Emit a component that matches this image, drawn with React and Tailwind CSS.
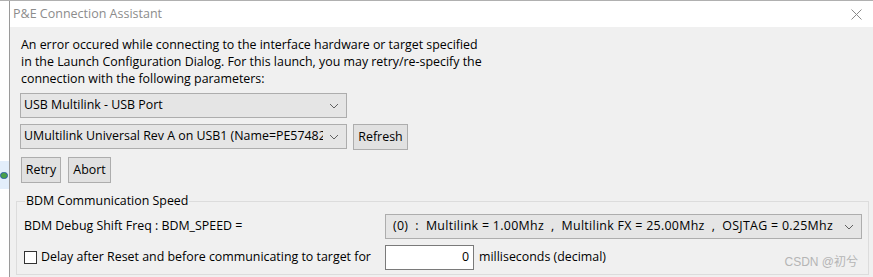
import React from 'react';

const font = { fontFamily: '"Open Sans", "Noto Sans CJK SC", sans-serif' };

function Chevron() {
  return (
    <svg width="10" height="6" viewBox="0 0 10 6" className="shrink-0">
      <polyline points="1,1 5,5 9,1" fill="none" stroke="#606060" strokeWidth="1" />
    </svg>
  );
}

function Combo({ text, className }) {
  return (
    <div className={`h-[25px] flex items-center justify-between bg-[#e5e5e5] border border-[#adadad] pl-[3px] pr-[7px] ${className}`}>
      <span className="whitespace-pre overflow-hidden mr-[6px]">{text}</span>
      <Chevron />
    </div>
  );
}

function Btn({ children, className }) {
  return (
    <div className={`h-[26px] flex items-center justify-center bg-[#e1e1e1] border border-[#adadad] ${className}`}>
      {children}
    </div>
  );
}

export default function App() {
  return (
    <div className="w-[873px] h-[277px] bg-white flex overflow-hidden relative text-[12.4px] text-black border-t border-[#b0b0b0]" style={font}>
      {/* outside strip at left */}
      <div className="w-[9px] shrink-0 flex flex-col">
        <div className="h-[160px]" />
        <div className="h-[28px] bg-[#e3eefa] flex items-center">
          <div className="w-[8px] h-[7px] rounded-sm bg-[#4aa04a] border border-[#2b5fa8]" />
        </div>
      </div>

      {/* dialog */}
      <div className="flex-1 flex flex-col border-l border-[#9a9a9a]">
        {/* title bar */}
        <div className="h-[26px] shrink-0 flex items-center justify-between pl-[3px] pr-[11px] bg-white">
          <span className="text-[#8c8c8c] text-[12.5px]">P&amp;E Connection Assistant</span>
          <svg width="11" height="11" viewBox="0 0 11 11">
            <path d="M0.5 0.5 L10.5 10.5 M10.5 0.5 L0.5 10.5" stroke="#8a8a8a" strokeWidth="1" />
          </svg>
        </div>

        {/* body */}
        <div className="flex-1 bg-[#f0f0f0] pl-[10px] pr-[4px] pt-[9px] flex flex-col">
          <p className="leading-[17px] pl-[1px] whitespace-nowrap">
            An error occured while connecting to the interface hardware or target specified<br />
            in the Launch Configuration Dialog. For this launch, you may retry/re-specify the<br />
            connection with the following parameters:
          </p>

          <Combo text="USB Multilink - USB Port" className="w-[327px] mt-[6px]" />

          <div className="flex gap-[6px] mt-[6px]">
            <Combo text="UMultilink Universal Rev A on USB1 (Name=PE5748207)" className="w-[327px]" />
            <Btn className="w-[55px] h-[25px]">Refresh</Btn>
          </div>

          <div className="flex gap-[7px] mt-[7px] pl-[1px]">
            <Btn className="w-[40px]">Retry</Btn>
            <Btn className="w-[43px]">Abort</Btn>
          </div>

          {/* group box */}
          <fieldset className="mt-[10px] -ml-[4px] border border-[#dcdcdc] pl-[7px] pr-[6px] pb-[5px] h-[82px]">
            <legend className="px-[1px] ml-[1px] leading-[16px]">BDM Communication Speed</legend>
            <div className="flex items-center justify-between mt-[5px]">
              <span>BDM Debug Shift Freq : BDM_SPEED =</span>
              <Combo
                text={'(0)  :  Multilink = 1.00Mhz  ,  Multilink FX = 25.00Mhz  ,  OSJTAG = 0.25Mhz'}
                className="w-[477px] pl-[7px] tracking-[0.3px]"
              />
            </div>
            <div className="flex items-center mt-[6px]">
              <div className="w-[13px] h-[13px] bg-white border border-[#333] mr-[4px]" />
              <span className="w-[344px] whitespace-nowrap">Delay after Reset and before communicating to target for</span>
              <div className="w-[89px] h-[25px] bg-white border border-[#7a7a7a] flex items-center justify-end pr-[4px]">0</div>
              <span className="ml-[5px]">milliseconds (decimal)</span>
            </div>
          </fieldset>
        </div>
      </div>

      <span className="absolute right-[15px] bottom-[6px] text-[12px] text-[#b5b5b5]" style={{ fontFamily: '"Liberation Sans", "Noto Sans CJK SC", sans-serif' }}>
        CSDN @初兮
      </span>
    </div>
  );
}
